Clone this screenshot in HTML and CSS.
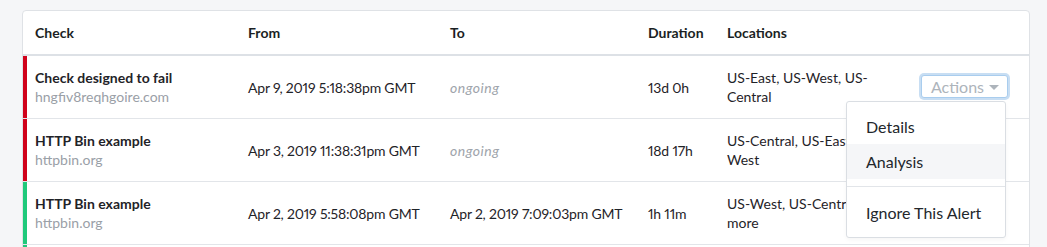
FILE: index.html
```html
<!DOCTYPE html>
<html>
<head>
<meta charset="utf-8">
<link rel="stylesheet" href="styles.css">
</head>
<body>
<div class="card">
  <div class="row head">
    <div class="cell">Check</div>
    <div class="cell">From</div>
    <div class="cell">To</div>
    <div class="cell">Duration</div>
    <div class="cell">Locations</div>
    <div class="cell"></div>
  </div>
  <div class="row fail">
    <div class="cell check"><div class="name">Check designed to fail</div><div class="host">hngfiv8reqhgoire.com</div></div>
    <div class="cell num">Apr 9, 2019 5:18:38pm GMT</div>
    <div class="cell ongoing">ongoing</div>
    <div class="cell num">13d 0h</div>
    <div class="cell loc">US-East, US-West, US-Central</div>
    <div class="cell actions">
      <button class="btn">Actions <span class="caret"></span></button>
      <div class="menu">
        <div class="item">Details</div>
        <div class="item hover">Analysis</div>
        <div class="divider"></div>
        <div class="item">Ignore This Alert</div>
      </div>
    </div>
  </div>
  <div class="row fail">
    <div class="cell check"><div class="name">HTTP Bin example</div><div class="host">httpbin.org</div></div>
    <div class="cell num">Apr 3, 2019 11:38:31pm GMT</div>
    <div class="cell ongoing">ongoing</div>
    <div class="cell num">18d 17h</div>
    <div class="cell loc">US-Central, US-East, US-West</div>
    <div class="cell actions"></div>
  </div>
  <div class="row ok">
    <div class="cell check"><div class="name">HTTP Bin example</div><div class="host">httpbin.org</div></div>
    <div class="cell num">Apr 2, 2019 5:58:08pm GMT</div>
    <div class="cell num">Apr 2, 2019 7:09:03pm GMT</div>
    <div class="cell num">1h 11m</div>
    <div class="cell loc">US-West, US-Central, +1 more</div>
    <div class="cell actions"></div>
  </div>
  <div class="row ok"></div>
</div>
</body>
</html>
```
FILE: styles.css
```css
html, body {
  margin: 0;
  padding: 0;
  background: #f5f6f8;
  font-family: Lato, "Liberation Sans", sans-serif;
  color: #1f2328;
  font-size: 14px;
  line-height: 19px;
  overflow: hidden;
}
.card {
  margin: 10px 0 0 22px;
  width: 1006px;
  background: #fff;
  border: 1px solid #dfe2e6;
  border-radius: 4px;
}
.row {
  display: grid;
  grid-template-columns: 213px 202px 198px 79px 160px 1fr;
  align-items: center;
  padding-left: 12px;
  height: 62px;
  border-bottom: 1px solid #e2e5e9;
  position: relative;
}
.row.head {
  height: 43px;
  border-bottom: 2px solid #dde1e6;
  font-weight: 700;
  color: #1b1f24;
}
.row.fail { box-shadow: inset 4px 0 0 #d0021b; }
.row.ok { box-shadow: inset 4px 0 0 #1fc97b; }
.name { font-weight: 700; }
.host { color: #9aa0a7; }
.num { font-variant-numeric: proportional-nums; letter-spacing: -0.2px; }
.ongoing { color: #9ea4ab; font-style: italic; letter-spacing: 0.5px; }
.actions {
  position: relative;
  display: flex;
  justify-content: flex-end;
  padding-right: 21px;
}
.btn {
  font-family: inherit;
  font-size: 16px;
  color: #adb4bb;
  background: #fff;
  border: 1px solid #a9cdee;
  box-shadow: 0 0 0 2px #c8def3;
  border-radius: 3px;
  height: 23px;
  padding: 0 8px 0 9px;
  display: flex;
  align-items: center;
  gap: 5px;
  margin-top: -1px;
}
.caret {
  width: 0;
  height: 0;
  border-left: 5px solid transparent;
  border-right: 5px solid transparent;
  border-top: 5px solid #adb4bb;
  margin-top: 1px;
}
.menu {
  position: absolute;
  top: 25px;
  right: 23px;
  width: 158px;
  background: #fff;
  border: 1px solid #dadee3;
  border-radius: 3px;
  padding: 7px 0 7px;
  z-index: 5;
  box-shadow: 0 2px 4px rgba(0,0,0,0.04);
  font-size: 16px;
  color: #23272c;
}
.item {
  height: 35px;
  display: flex;
  align-items: center;
  padding-left: 19px;
}
.item.hover { background: #f5f6f8; }
.divider {
  height: 1px;
  background: #e2e5e9;
  margin: 7px 0 8px;
}
```
